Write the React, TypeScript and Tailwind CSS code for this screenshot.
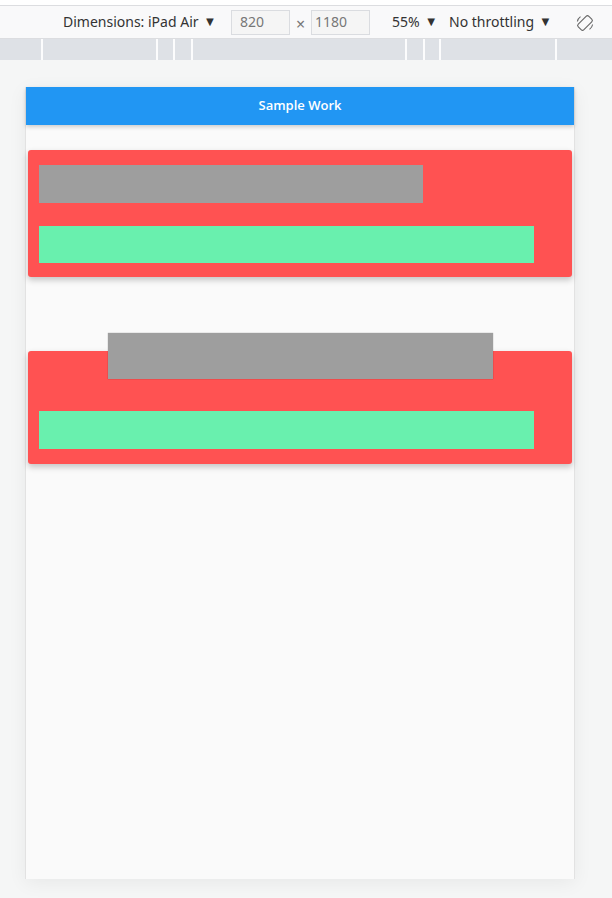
const ticks = [43, 115, 17, 18, 214, 18, 16, 116];

function RotateIcon() {
  return (
    <svg width="18" height="18" viewBox="0 0 18 18" fill="none" stroke="#666" strokeWidth="1.1">
      <rect x="5" y="1.5" width="8" height="15" rx="2" transform="rotate(45 9 9)" />
      <path d="M1.4 7.5 A7.6 7.6 0 0 1 4.5 2.6" />
      <path d="M16.6 10.5 A7.6 7.6 0 0 1 13.5 15.4" />
    </svg>
  );
}

function Arrow() {
  return <span className="text-[13px] ml-[5px] relative -top-[1px]">▼</span>;
}

export default function App() {
  return (
    <div className="w-[612px] h-[898px] overflow-hidden bg-[#f5f6f6]" style={{ fontFamily: "'Noto Sans', 'Open Sans', sans-serif" }}>
      {/* devtools toolbar */}
      <div className="h-[5px] bg-white" />
      <div className="h-[34px] bg-[#f9f9fa] border-y border-[#dcdde0] flex items-center text-[14px] text-[#333] leading-none">
        <span className="ml-[63px] w-[168px] shrink-0 whitespace-nowrap">Dimensions: iPad Air<Arrow /></span>
        <div className="w-[59px] h-[25px] shrink-0 border border-[#dadce0] bg-[#f5f5f5] text-[#777] flex items-center pl-[8px]">820</div>
        <span className="w-[21px] shrink-0 text-center text-[#777] text-[16px] mt-[3px]">×</span>
        <div className="w-[59px] h-[25px] shrink-0 border border-[#dadce0] bg-[#f5f5f5] text-[#777] flex items-center pl-[3px]">1180</div>
        <span className="ml-[22px] w-[57px] shrink-0 whitespace-nowrap">55%<Arrow /></span>
        <span className="w-[127px] shrink-0 whitespace-nowrap">No throttling<Arrow /></span>
        <span className="mt-[1px] shrink-0"><RotateIcon /></span>
      </div>
      <div className="h-[21px] bg-[#dee1e6] flex">
        {ticks.map((w, i) => (
          <div key={i} style={{ width: w }} className="h-full border-r-2 border-white/90 shrink-0" />
        ))}
      </div>

      {/* device frame */}
      <div className="pl-[25px] pt-[27px]">
        <div className="w-[550px] h-[792px] bg-[#fafafa] border-x border-[#e2e2e2] shadow-[0_4px_18px_rgba(0,0,0,0.06)]">
          <div className="h-[38px] bg-[#2196f3] text-white text-[13px] font-semibold flex items-center justify-center shadow-[0_2px_4px_rgba(0,0,0,0.18)]" style={{ fontFamily: "'Open Sans', sans-serif" }}>
            Sample Work
          </div>

          <div className="mx-[2px] mt-[25px] bg-[#ff5252] rounded-[3px] pt-[15px] pb-[14px] pl-[11px] shadow-[0_3px_6px_rgba(0,0,0,0.22)]">
            <div className="w-[384px] h-[38px] bg-[#9e9e9e]" />
            <div className="mt-[23px] w-[495px] h-[37px] bg-[#69f0ae]" />
          </div>

          <div className="mx-[2px] mt-[74px] bg-[#ff5252] rounded-[3px] pb-[15px] flex flex-col shadow-[0_3px_6px_rgba(0,0,0,0.22)]">
            <div className="-mt-[18px] self-center w-[385px] h-[46px] bg-[#9e9e9e] shadow-[0_0_1px_rgba(0,0,0,0.4)]" />
            <div className="mt-[32px] ml-[11px] w-[495px] h-[38px] bg-[#69f0ae]" />
          </div>
        </div>
      </div>
    </div>
  );
}
